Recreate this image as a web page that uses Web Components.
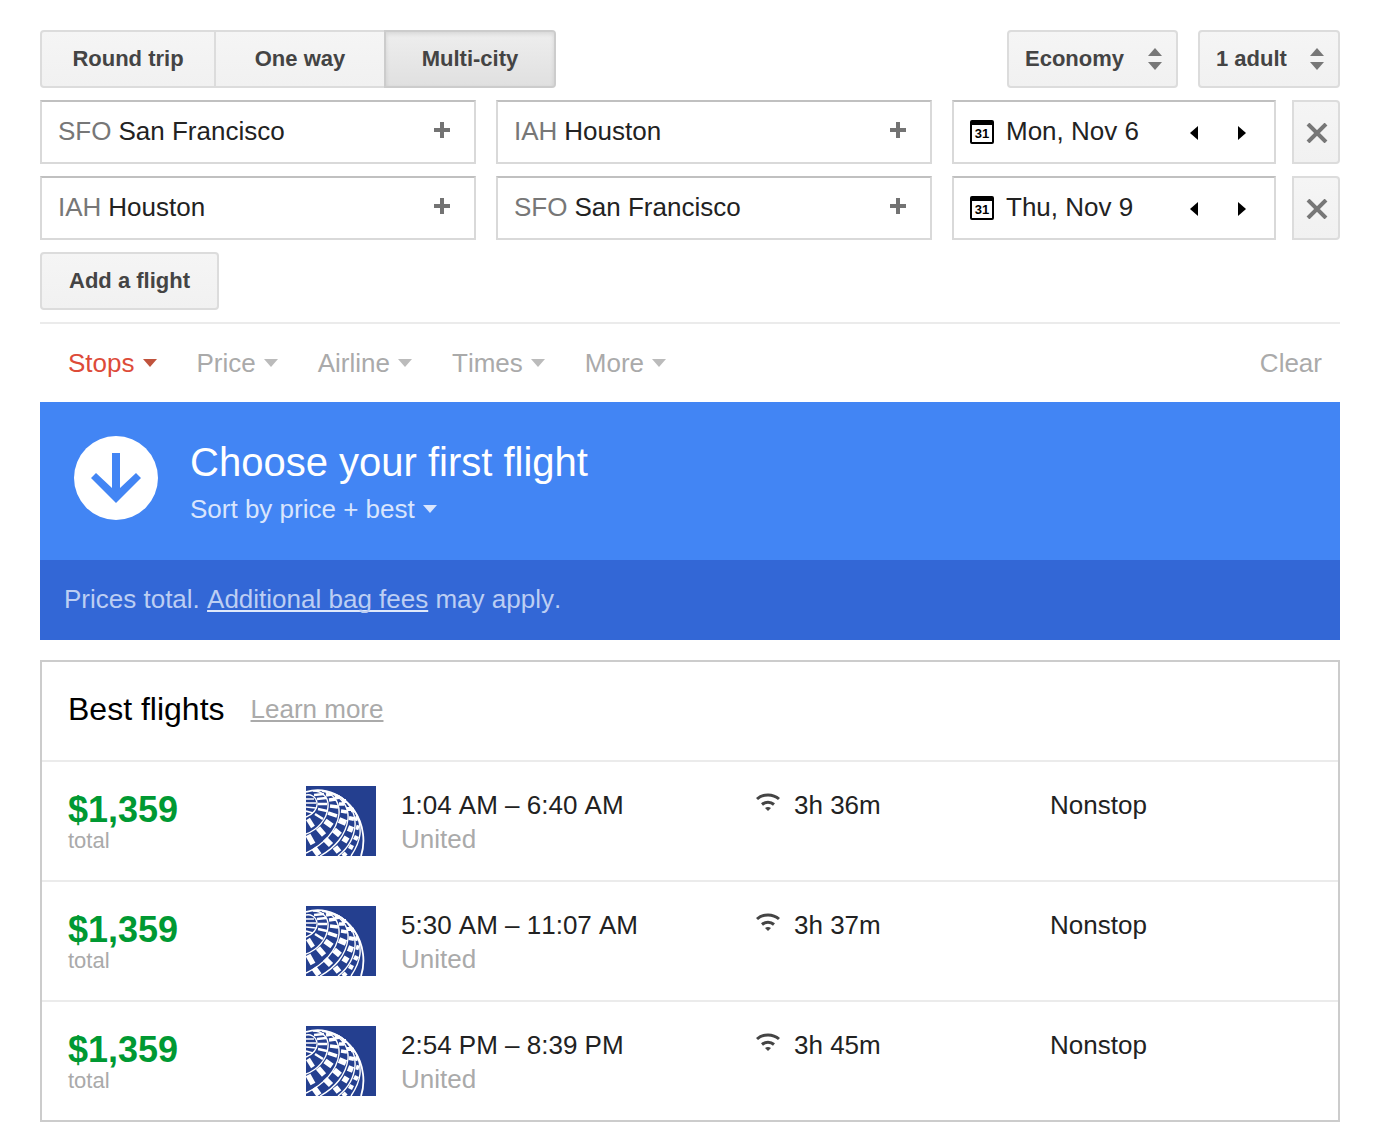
<!DOCTYPE html>
<html lang="en">
<head>
<meta charset="utf-8">
<meta name="viewport" content="width=device-width, initial-scale=1">
<title>Flights</title>
<style>
  body {
    margin: 0;
    background: #fff;
    color: #222;
    font-family: Arial, "Liberation Sans", sans-serif;
    font-size: 26px;
    font-kerning: none;
    line-height: 34px;
  }
</style>
</head>
<body>
<flight-page></flight-page>

<script>
  // Shared reset and button look, included in each shadow root
  const base = `
    * { box-sizing: border-box; }
    button, input, select {
      font: inherit;
      font-kerning: inherit;
      color: inherit;
      margin: 0;
      padding: 0;
      border: 0;
      border-radius: 0;
      background: none;
      appearance: none;
    }
    button, select { cursor: pointer; }
    svg { display: block; flex: none; }
    .btn {
      height: 58px;
      padding: 0 27px;
      border: 2px solid #dcdcdc;
      border-radius: 4px;
      background: linear-gradient(#f5f5f5, #f1f1f1);
      color: #444;
      font-size: 22px;
      font-weight: bold;
    }
  `;

  const caret = `
    <svg width="14" height="8" viewBox="0 0 14 8" fill="currentColor" aria-hidden="true">
      <path d="M0 0h14L7 8z"/>
    </svg>
  `;

  class TripType extends HTMLElement {
    constructor() {
      super();
      this.attachShadow({ mode: 'open' });
      this.shadowRoot.innerHTML = `
        <style>
          ${base}
          :host { display: flex; }
          .btn {
            min-width: 172px;
            padding: 0 30px;
            border-radius: 0;
          }
          .btn + .btn { margin-left: -2px; }
          .btn:first-of-type { min-width: 176px; border-radius: 4px 0 0 4px; }
          .btn:last-of-type { border-radius: 0 4px 4px 0; }
          .btn[aria-pressed="true"] {
            border-color: #ccc;
            background: linear-gradient(#eee, #e0e0e0);
            box-shadow: inset 0 2px 4px rgba(0, 0, 0, 0.1);
          }
        </style>
        <button class="btn" type="button" aria-pressed="false">Round trip</button>
        <button class="btn" type="button" aria-pressed="false">One way</button>
        <button class="btn" type="button" aria-pressed="true">Multi-city</button>
      `;
      this.buttons = this.shadowRoot.querySelectorAll('button');
      this.shadowRoot.addEventListener('click', (event) => this.select(event.target));
    }

    select(target) {
      if (!target.matches('button')) return;
      this.buttons.forEach((b) => b.setAttribute('aria-pressed', b === target));
    }
  }
  customElements.define('trip-type', TripType);

  class OptionSelect extends HTMLElement {
    connectedCallback() {
      this.attachShadow({ mode: 'open' });
      this.shadowRoot.innerHTML = `
        <style>
          ${base}
          :host { display: block; position: relative; }
          .btn { padding: 0 51px 0 16px; }
          svg {
            position: absolute;
            top: 18px;
            right: 16px;
            pointer-events: none;
          }
        </style>
        <select class="btn" aria-label="${this.getAttribute('label')}">
          <option>${this.getAttribute('value')}</option>
        </select>
        <svg width="14" height="22" viewBox="0 0 14 22" fill="#777" aria-hidden="true">
          <path d="M0 8h14L7 0zM0 14h14L7 22z"/>
        </svg>
      `;
    }
  }
  customElements.define('option-select', OptionSelect);

  class AirportField extends HTMLElement {
    connectedCallback() {
      this.attachShadow({ mode: 'open' });
      this.shadowRoot.innerHTML = `
        <style>
          ${base}
          :host {
            display: flex;
            align-items: center;
            box-sizing: border-box;
            height: 64px;
            min-width: 0;
            padding: 0 24px 2px 16px;
            border: 2px solid #d9d9d9;
            border-top-color: #c0c0c0;
          }
          label { margin-right: 7px; color: #777; }
          input { flex: 1; min-width: 0; height: 34px; outline: 0; }
          button { padding-bottom: 2px; }
        </style>
        <label for="city">${this.getAttribute('code')}</label>
        <input id="city" type="text" value="${this.getAttribute('city')}">
        <button type="button" aria-label="Add airport">
          <svg width="16" height="16" viewBox="0 0 16 16" fill="#737373">
            <path d="M6 0h4v6h6v4h-6v6H6v-6H0V6h6z"/>
          </svg>
        </button>
      `;
    }
  }
  customElements.define('airport-field', AirportField);

  class DateField extends HTMLElement {
    connectedCallback() {
      this.attachShadow({ mode: 'open' });
      this.shadowRoot.innerHTML = `
        <style>
          ${base}
          :host {
            display: flex;
            align-items: center;
            box-sizing: border-box;
            height: 64px;
            min-width: 0;
            padding: 0 8px 0 16px;
            border: 2px solid #d9d9d9;
            border-top-color: #c0c0c0;
          }
          input {
            flex: 1;
            min-width: 0;
            height: 34px;
            margin: 0 0 2px 12px;
            outline: 0;
          }
          button {
            display: flex;
            justify-content: center;
            width: 48px;
            padding-top: 2px;
            color: #000;
          }
        </style>
        <svg width="24" height="24" viewBox="0 0 24 24" aria-hidden="true">
          <rect x="1" y="1" width="22" height="22" rx="1" fill="#fff" stroke="#000" stroke-width="2"/>
          <path d="M1 1h22v4H1z"/>
          <text x="12" y="18" text-anchor="middle" font-size="13" font-weight="bold">31</text>
        </svg>
        <input type="text" aria-label="Departure date" value="${this.getAttribute('value')}">
        <button type="button" aria-label="Previous day">
          <svg width="8" height="14" viewBox="0 0 8 14" fill="currentColor"><path d="M8 0v14L0 7z"/></svg>
        </button>
        <button type="button" aria-label="Next day">
          <svg width="8" height="14" viewBox="0 0 8 14" fill="currentColor"><path d="M0 0v14l8-7z"/></svg>
        </button>
      `;
    }
  }
  customElements.define('date-field', DateField);

  class FlightLeg extends HTMLElement {
    connectedCallback() {
      const [fromCode, fromCity] = this.getAttribute('from').split('|');
      const [toCode, toCity] = this.getAttribute('to').split('|');
      this.attachShadow({ mode: 'open' });
      this.shadowRoot.innerHTML = `
        <style>
          ${base}
          :host {
            display: grid;
            grid-template-columns: 1fr 1fr 388px;
            gap: 20px;
          }
          .when { display: flex; gap: 16px; }
          date-field { flex: 1; }
          .btn {
            display: flex;
            align-items: center;
            justify-content: center;
            width: 48px;
            height: 64px;
            padding: 2px 0 0 2px;
            border-radius: 0 4px 4px 0;
          }
        </style>
        <airport-field code="${fromCode}" city="${fromCity}"></airport-field>
        <airport-field code="${toCode}" city="${toCity}"></airport-field>
        <div class="when">
          <date-field value="${this.getAttribute('date')}"></date-field>
          <button class="btn" type="button" aria-label="Remove flight">
            <svg width="22" height="20" viewBox="0 0 22 20" stroke="#777" stroke-width="4">
              <path d="M2 1l18 18M20 1L2 19"/>
            </svg>
          </button>
        </div>
      `;
      this.shadowRoot.querySelector('.btn').addEventListener('click', () => this.remove());
    }
  }
  customElements.define('flight-leg', FlightLeg);

  class SearchForm extends HTMLElement {
    constructor() {
      super();
      this.attachShadow({ mode: 'open' });
      this.shadowRoot.innerHTML = `
        <style>
          ${base}
          :host {
            display: flex;
            flex-direction: column;
            gap: 12px;
            padding-bottom: 12px;
            border-bottom: 2px solid #ebebeb;
          }
          .top { display: flex; justify-content: space-between; }
          .options { display: flex; gap: 20px; }
          .add { align-self: flex-start; }
        </style>
        <div class="top">
          <trip-type></trip-type>
          <div class="options">
            <option-select label="Cabin" value="Economy"></option-select>
            <option-select label="Passengers" value="1 adult"></option-select>
          </div>
        </div>
        <flight-leg from="SFO|San Francisco" to="IAH|Houston" date="Mon, Nov 6"></flight-leg>
        <flight-leg from="IAH|Houston" to="SFO|San Francisco" date="Thu, Nov 9"></flight-leg>
        <button class="btn add" type="button">Add a flight</button>
      `;
    }
  }
  customElements.define('search-form', SearchForm);

  class FilterBar extends HTMLElement {
    constructor() {
      super();
      this.attachShadow({ mode: 'open' });
      const filters = ['Stops', 'Price', 'Airline', 'Times', 'More'];
      this.shadowRoot.innerHTML = `
        <style>
          ${base}
          :host {
            display: flex;
            align-items: center;
            gap: 40px;
            height: 78px;
            padding: 0 18px 0 28px;
            box-sizing: border-box;
            color: #aaa;
          }
          button { display: flex; align-items: center; gap: 8px; }
          button svg { color: #bbb; }
          .active { color: #dd4b39; }
          .active svg { color: #c0533d; }
          .clear { margin-left: auto; }
        </style>
        ${filters.map((f, i) => `<button type="button"${i ? '' : ' class="active"'}>${f}${caret}</button>`).join('')}
        <button class="clear" type="button">Clear</button>
      `;
    }
  }
  customElements.define('filter-bar', FilterBar);

  class ChooseBanner extends HTMLElement {
    constructor() {
      super();
      this.attachShadow({ mode: 'open' });
      this.shadowRoot.innerHTML = `
        <style>
          ${base}
          :host { display: block; color: #fff; }
          .main {
            display: flex;
            align-items: flex-start;
            gap: 32px;
            padding: 34px 34px 30px;
            background: #4285f4;
          }
          h1 {
            margin: 0;
            font-size: 40px;
            font-weight: normal;
            line-height: 52px;
          }
          button {
            display: flex;
            align-items: center;
            gap: 8px;
            height: 42px;
            color: #d9e5fd;
          }
          p {
            margin: 0;
            padding: 22px 24px 24px;
            background: #3367d6;
            color: #bccef3;
          }
          a {
            color: inherit;
            text-decoration: underline 2px #e0e9fa;
            text-underline-offset: 2px;
            text-decoration-skip-ink: none;
          }
        </style>
        <div class="main">
          <svg width="84" height="84" viewBox="0 0 84 84" aria-hidden="true">
            <circle cx="42" cy="42" r="42" fill="#fff"/>
            <path d="M38 17h8v35l16-15 5 5-25 25-25-25 5-5 16 15z" fill="#4285f4"/>
          </svg>
          <div>
            <h1>Choose your first flight</h1>
            <button type="button">Sort by price + best${caret}</button>
          </div>
        </div>
        <p><slot></slot><a href="#bag-fees">Additional bag fees</a> may apply.</p>
      `;
    }
  }
  customElements.define('choose-banner', ChooseBanner);

  // Globe tail mark: curved lines with blocks in the bands between them
  class AirlineLogo extends HTMLElement {
    constructor() {
      super();
      this.attachShadow({ mode: 'open' });
      this.shadowRoot.innerHTML = `
        <style>
          :host { display: block; width: 70px; height: 70px; }
          svg { display: block; }
        </style>
        <svg width="70" height="70" viewBox="0 0 70 70" role="img" aria-label="United">
          <path fill="#243f8f" d="M0 0h70v70H0z"/>
          <g fill="none" stroke="#fff" stroke-width="1.400">
            <path stroke-width="1.800" d="M0 6C9 3 20 4 29 8C45 16 55 31 57 48C58 56 57 64 55 70"/>
            <path d="M0 9C4 8 10 10 11 17C12 23 6 29 0 31"/>
            <path d="M7 5C16 5 23 11 22 21C21 34 11 44 0 48"/>
            <path d="M16 5C27 7 34 16 33 28C31 45 17 59 0 67"/>
            <path d="M24 7C36 11 43 21 42 33C40 49 29 62 14 70"/>
            <path d="M31 9C43 15 50 27 49 40C48 52 41 63 32 70"/>
            <path d="M37 13C49 22 55 34 54 48C53 57 49 64 45 70"/>
          </g>
          <g fill="none" stroke="#fff">
            <path stroke-width="1.700" d="M0 13h8M0 17h10M0 21l10 1M0 25l7 2"/>
            <path stroke-width="2.500" d="M8 9l10-1M11 13l9-1M12 18h9M12 23l9 2M9 28l8 5"/>
            <path stroke-width="4.500" d="M2 33l5 8"/>
            <path stroke-width="3.500" d="M20 9l6-1M23 14l7-1M24 20l8 1M22 27l9 3"/>
            <path stroke-width="5.500" d="M19 35l7 5M12 42l6 7M2 49l5 9"/>
            <path stroke-width="3.500" d="M29 12l5-1M33 18l5 0M35 25l6 1"/>
            <path stroke-width="6" d="M33 34l7 3M28 44l6 5M19 53l6 6M8 62l5 7"/>
            <path stroke-width="4" d="M36 15l4 0M41 23l4 0M43 32l5 1"/>
            <path stroke-width="6" d="M42 42l5 2M37 52l5 3M29 61l4 5"/>
            <path stroke-width="4.500" d="M45 24l3 0M49 32l3 1M50 41l3 1M48 51l4 2M43 60l4 2M37 67l3 3"/>
          </g>
        </svg>
      `;
    }
  }
  customElements.define('airline-logo', AirlineLogo);

  class FlightRow extends HTMLElement {
    connectedCallback() {
      this.attachShadow({ mode: 'open' });
      this.shadowRoot.innerHTML = `
        <style>
          ${base}
          :host {
            display: grid;
            grid-template-columns: 238fr 95px 355fr 294fr 288fr;
            padding: 24px 0 24px 26px;
            border-top: 2px solid #ebebeb;
          }
          .fare { padding-top: 5px; }
          .price {
            color: #093;
            font-size: 36px;
            font-weight: bold;
            line-height: 38px;
          }
          .total { color: #aaa; font-size: 22px; line-height: 24px; }
          .cell { padding-top: 2px; }
          .airline { color: #aaa; }
          .length { display: flex; gap: 14px; height: 36px; align-items: center; }
        </style>
        <div class="fare">
          <div class="price">${this.getAttribute('price')}</div>
          <div class="total">total</div>
        </div>
        <airline-logo></airline-logo>
        <div class="cell">
          <div>${this.getAttribute('times')}</div>
          <div class="airline">United</div>
        </div>
        <div class="cell length">
          <svg width="24" height="24" viewBox="0 0 24 24" fill="none" stroke="#444" stroke-width="3" role="img" aria-label="Wi-Fi">
            <path d="M1 6C7 .5 17 .5 23 6M6 11.500C9.500 8.500 14.500 8.500 18 11.500"/>
            <path d="M9 15q3-2 6 0l-3 3z" fill="#444" stroke="none"/>
          </svg>
          <span>${this.getAttribute('duration')}</span>
        </div>
        <div class="cell">Nonstop</div>
      `;
    }
  }
  customElements.define('flight-row', FlightRow);

  class FlightResults extends HTMLElement {
    constructor() {
      super();
      this.attachShadow({ mode: 'open' });
      this.shadowRoot.innerHTML = `
        <style>
          ${base}
          :host {
            display: block;
            margin-top: 20px;
            border: 2px solid #ccc;
          }
          header {
            display: flex;
            align-items: center;
            gap: 26px;
            height: 98px;
            padding: 0 26px 4px;
          }
          h2 {
            margin: 0;
            color: #000;
            font-size: 32px;
            font-weight: normal;
          }
          a {
            color: #aaa;
            text-decoration: underline 2px;
            text-underline-offset: 2px;
            text-decoration-skip-ink: none;
          }
        </style>
        <header>
          <h2>Best flights</h2>
          <a href="#learn-more">Learn more</a>
        </header>
        <slot></slot>
      `;
    }
  }
  customElements.define('flight-results', FlightResults);

  class FlightPage extends HTMLElement {
    constructor() {
      super();
      this.attachShadow({ mode: 'open' });
      this.shadowRoot.innerHTML = `
        <style>
          :host { display: block; padding: 30px 40px 20px; }
        </style>
        <search-form></search-form>
        <filter-bar></filter-bar>
        <choose-banner>Prices total. </choose-banner>
        <flight-results>
          <flight-row price="$1,359" times="1:04 AM – 6:40 AM" duration="3h 36m"></flight-row>
          <flight-row price="$1,359" times="5:30 AM – 11:07 AM" duration="3h 37m"></flight-row>
          <flight-row price="$1,359" times="2:54 PM – 8:39 PM" duration="3h 45m"></flight-row>
        </flight-results>
      `;
    }
  }
  customElements.define('flight-page', FlightPage);
</script>
</body>
</html>
